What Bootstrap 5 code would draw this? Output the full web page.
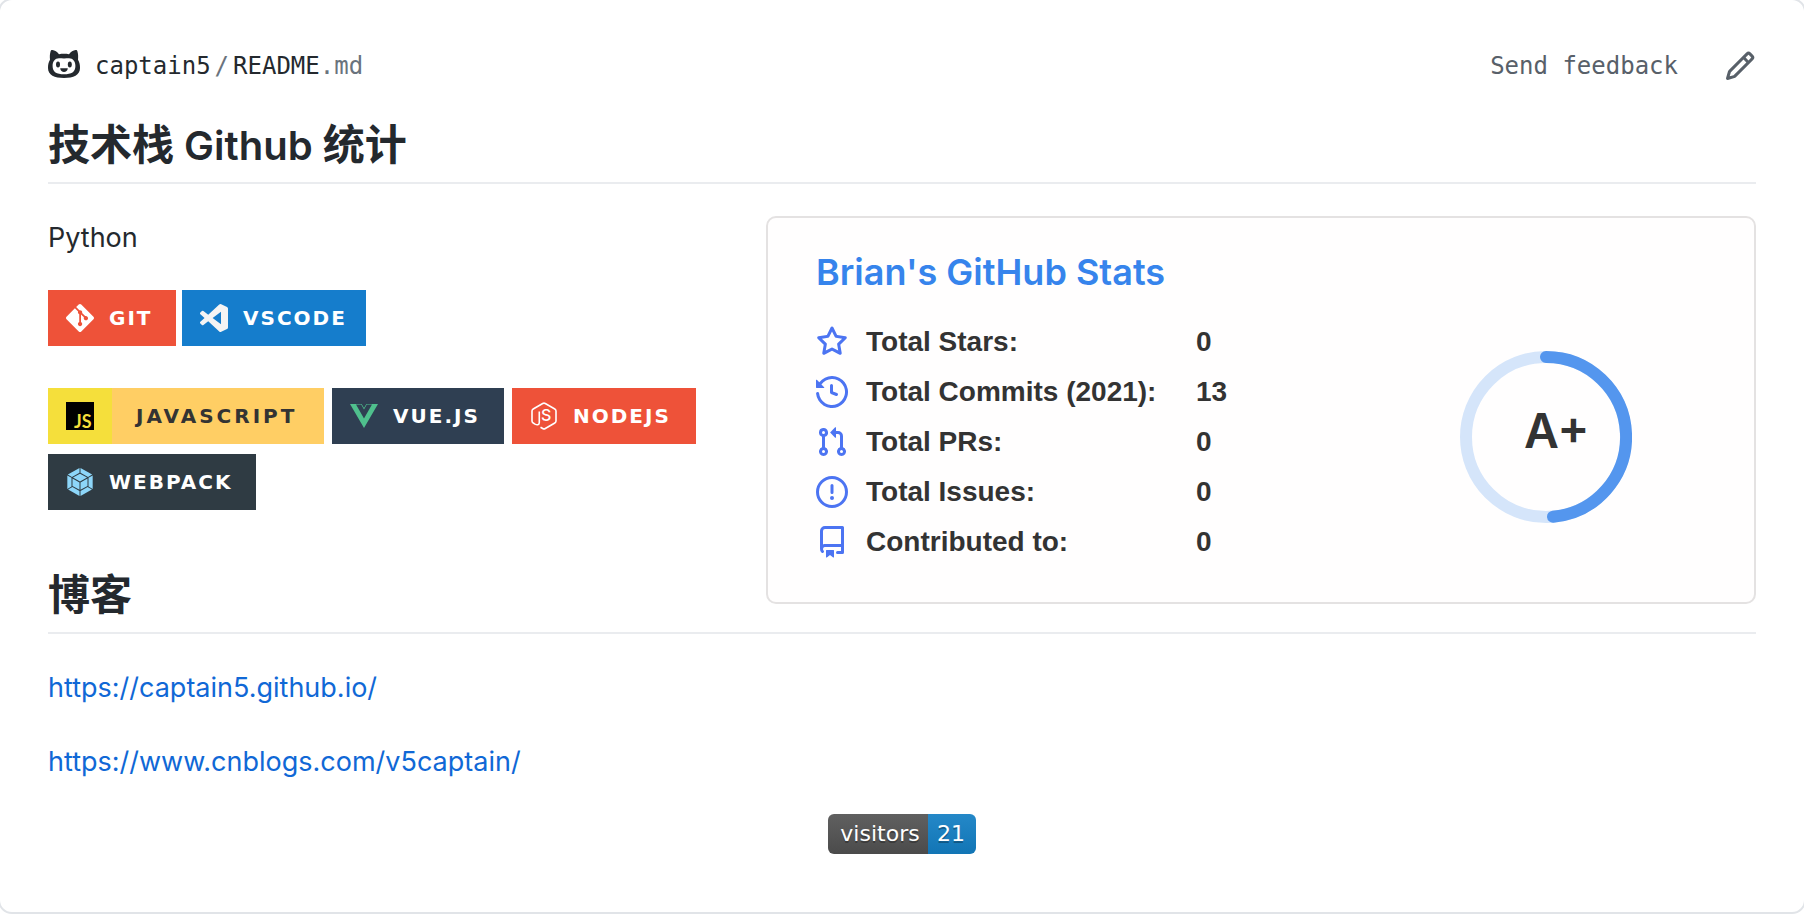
<!DOCTYPE html>
<html lang="zh-CN">
<head>
<meta charset="utf-8">
<meta name="viewport" content="width=device-width, initial-scale=1">
<title>captain5/README.md</title>
<link href="https://cdn.jsdelivr.net/npm/bootstrap@5.3.0/dist/css/bootstrap.min.css" rel="stylesheet">
<style>
  body { font-family: Inter, "Noto Sans CJK SC", sans-serif; font-size: 27px; line-height: 44px; color: #24292e; overflow-x: hidden; }
  a { color: #1068d6; }
  .readme { border: 2px solid #e1e4e8; border-radius: 14px; margin: -2px -2px 0; padding: 50px 48px 58px; }
  .mono { font-family: "DejaVu Sans Mono", monospace; font-size: 24px; line-height: 32px; }
  .topline { margin-bottom: 36px; }
  .topline .mark-cat { margin-right: 15px; }
  .topline .edit { margin-left: 46px; }
  .path-sep { color: #6a737d; margin: 0 4px; }
  .path-ext { color: #6a737d; }
  .quiet { color: #586069; }
  .quiet:hover { color: #0366d6; }
  .section-title { font-size: 42px; line-height: 54px; font-weight: 600; padding-bottom: 10px; border-bottom: 2px solid #eaecef; margin: 0 0 32px; }
  .section-title .latin { font-size: 40px; line-height: 40px; }
  .para { margin: 0 0 30px; }
  .shields { column-gap: 8px; row-gap: 10px; margin-bottom: 58px; }
  .shields.tight { column-gap: 6px; margin-bottom: 42px; }
  .shield { height: 56px; font-family: "DejaVu Sans", sans-serif; font-weight: 700; font-size: 20px; line-height: 56px; color: #fff; letter-spacing: 2px; white-space: nowrap; text-decoration: none; }
  .shield:hover { color: #fff; }
  .shield svg { width: 28px; height: 28px; margin: 0 15px 0 18px; flex: none; }
  .shield-git, .shield-node { background: #ee5239; }
  .shield-git { width: 128px; }
  .shield-code { background: #157dcc; width: 184px; }
  .shield-js { background: #ffce64; color: #333; width: 276px; letter-spacing: 3px; }
  .shield-js:hover { color: #333; }
  .shield-js .logo-cell { background: #f5df3b; width: 64px; height: 56px; margin-right: 24px; }
  .shield-js svg { margin: 0; }
  .shield-vue { background: #2f3f52; width: 172px; }
  .shield-node { width: 184px; }
  .shield-webpack { background: #2f3b43; width: 208px; }
  .stats { width: 990px; max-width: 58%; height: 388px; border: 2px solid #e4e2e2; border-radius: 10px; background: #fffefe; padding: 33px 0 0 48px; margin-left: 64px; }
  .stats-title { font-size: 36px; line-height: 42px; font-weight: 600; color: #3684ec; margin: 0 0 24px; }
  .stat-table { font-family: "Liberation Sans", Arial, sans-serif; font-size: 28px; font-weight: 700; line-height: 50px; color: #333; }
  .stat-table td, .stat-table th { padding: 0; height: 50px; }
  .stat-icon { width: 50px; }
  .stat-name { width: 330px; }
  .stat-table svg { width: 32px; height: 32px; fill: #4c74f2; display: block; }
  .rank { width: 172px; height: 172px; margin: 20px 122px 0 0; }
  .rank text { font-family: Inter, sans-serif; font-weight: 600; font-size: 48px; fill: #333; }
  .visitors { font-family: "DejaVu Sans", sans-serif; font-size: 22px; line-height: 40px; color: #fff; border-radius: 6px; overflow: hidden; text-shadow: 0 2px 0 rgba(1,1,1,.3); }
  .visitors .tag { width: 100px; padding-left: 4px; background: linear-gradient(#606060, #4b4b4b); }
  .visitors .num { width: 48px; padding-right: 2px; background: linear-gradient(#2488c8, #1275b5); }
</style>
</head>
<body>
<main class="readme">
  <header class="topline d-flex align-items-center justify-content-between mono">
    <div class="d-flex align-items-center">
      <svg class="mark-cat" width="32" height="32" viewBox="0 0 32 32" aria-hidden="true">
        <path fill="#24292e" fill-rule="evenodd" d="M2.600 1.300C2.900.3 3.400 0 4.400.1C6.800.4 9.200 2 11 4.200C14.200 3.600 17.800 3.600 21 4.200C22.800 2 25.200.4 27.600.1C28.600 0 29.100.3 29.400 1.300C30.300 4.200 30.300 7 30 9.700C31.600 12.200 32 15 32 18C32 25 25.500 28 16 28S0 25 0 18C0 15 .4 12.200 2 9.700C1.700 7 1.700 4.200 2.600 1.300ZM11 8.300C7 8.300 4.600 11.500 4.600 16C4.600 22 8.500 24.300 16 24.300S27.400 22 27.400 16C27.400 11.500 25 8.300 21 8.300C19.500 8.300 18 8.500 16 8.500S12.500 8.300 11 8.300Z"/>
        <g fill="#24292e"><ellipse cx="10" cy="14.500" rx="2" ry="2.900"/><ellipse cx="21.800" cy="14.500" rx="2" ry="2.900"/><path d="M12.200 18.200H19.800C19.500 20.800 18 22 16 22S12.500 20.800 12.200 18.200Z"/></g>
      </svg>
      <span>captain5</span><span class="path-sep">/</span><span>README</span><span class="path-ext">.md</span>
    </div>
    <div class="d-flex align-items-center">
      <a href="#feedback" class="quiet text-decoration-none">Send feedback</a>
      <a href="#edit" class="quiet edit d-block" aria-label="Edit README">
        <svg class="d-block" width="32" height="32" viewBox="0 0 16 16" fill="currentColor"><path d="M11.013 1.427a1.750 1.750 0 012.474 0l1.086 1.086a1.750 1.750 0 010 2.474l-8.610 8.610c-.21.21-.47.364-.756.445l-3.251.93a.75.75 0 01-.927-.928l.929-3.250a1.750 1.750 0 01.445-.758l8.610-8.610zm1.414 1.060a.25.25 0 00-.354 0L10.811 3.750l1.439 1.440 1.263-1.263a.25.25 0 000-.354l-1.086-1.086zM11.189 6.250L9.750 4.810l-6.286 6.287a.25.25 0 00-.064.108l-.558 1.953 1.953-.558a.249.249 0 00.108-.064l6.286-6.286z"/></svg>
      </a>
    </div>
  </header>

  <h2 class="section-title">技术栈<span class="latin"> Github </span>统计</h2>

  <section class="stats float-end d-flex justify-content-between" aria-label="GitHub stats">
    <div>
      <h3 class="stats-title">Brian's GitHub Stats</h3>
      <table class="stat-table">
        <tbody>
          <tr><td class="stat-icon"><svg viewBox="0 0 16 16"><path fill-rule="evenodd" d="M8 .25a.75.75 0 01.673.418l1.882 3.815 4.210.612a.75.75 0 01.416 1.279l-3.046 2.970.719 4.192a.75.75 0 01-1.088.791L8 12.347l-3.766 1.980a.75.75 0 01-1.088-.79l.72-4.194L.818 6.374a.75.75 0 01.416-1.280l4.210-.611L7.327.668A.75.75 0 018 .25zm0 2.445L6.615 5.500a.75.75 0 01-.564.41l-3.097.45 2.240 2.184a.75.75 0 01.216.664l-.528 3.084 2.769-1.456a.75.75 0 01.698 0l2.770 1.456-.53-3.084a.75.75 0 01.216-.664l2.240-2.183-3.096-.45a.75.75 0 01-.564-.41L8 2.694v.001z"/></svg></td><th class="stat-name" scope="row">Total Stars:</th><td>0</td></tr>
          <tr><td><svg viewBox="0 0 16 16"><path fill-rule="evenodd" d="M1.643 3.143L.427 1.927A.25.25 0 000 2.104V5.750c0 .138.112.25.25.25h3.646a.25.25 0 00.177-.427L2.715 4.215a6.500 6.500 0 11-1.180 4.458.75.75 0 10-1.493.154 8.001 8.001 0 101.600-5.684zM7.750 4a.75.75 0 01.75.75v2.992l2.028.812a.75.75 0 01-.557 1.392l-2.500-1A.75.75 0 017 8.250v-3.500A.75.75 0 017.750 4z"/></svg></td><th scope="row">Total Commits (2021):</th><td>13</td></tr>
          <tr><td><svg viewBox="0 0 16 16"><path fill-rule="evenodd" d="M7.177 3.073L9.573.677A.25.25 0 0110 .854v4.792a.25.25 0 01-.427.177L7.177 3.427a.25.25 0 010-.354zM3.750 2.500a.75.75 0 100 1.500.75.75 0 000-1.500zm-2.250.75a2.250 2.250 0 113 2.122v5.256a2.251 2.251 0 11-1.500 0V5.372A2.250 2.250 0 011.500 3.250zM11 2.500h-1V4h1a1 1 0 011 1v5.628a2.251 2.251 0 101.500 0V5A2.500 2.500 0 0011 2.500zm1 10.250a.75.75 0 111.500 0 .75.75 0 01-1.500 0zM3.750 12a.75.75 0 100 1.500.75.75 0 000-1.500z"/></svg></td><th scope="row">Total PRs:</th><td>0</td></tr>
          <tr><td><svg viewBox="0 0 16 16"><path fill-rule="evenodd" d="M8 1.500a6.500 6.500 0 100 13 6.500 6.500 0 000-13zM0 8a8 8 0 1116 0A8 8 0 010 8zm9 3a1 1 0 11-2 0 1 1 0 012 0zm-.25-6.250a.75.75 0 00-1.500 0v3.500a.75.75 0 001.500 0v-3.500z"/></svg></td><th scope="row">Total Issues:</th><td>0</td></tr>
          <tr><td><svg viewBox="0 0 16 16"><path fill-rule="evenodd" d="M2 2.500A2.500 2.500 0 014.500 0h8.750a.75.75 0 01.75.75v12.500a.75.75 0 01-.75.75h-2.500a.75.75 0 110-1.500h1.750v-2h-8a1 1 0 00-.714 1.700.75.75 0 01-1.072 1.050A2.495 2.495 0 012 11.500v-9zm10.500-1V9h-8c-.356 0-.694.074-1 .208V2.500a1 1 0 011-1h8zM5 12.250v3.250a.25.25 0 00.4.2l1.450-1.087a.25.25 0 01.3 0L8.600 15.700a.25.25 0 00.4-.2v-3.250a.25.25 0 00-.25-.25h-3.500a.25.25 0 00-.25.25z"/></svg></td><th scope="row">Contributed to:</th><td>0</td></tr>
        </tbody>
      </table>
    </div>
    <svg class="rank align-self-center" viewBox="0 0 172 172" role="img" aria-label="Rank A+">
      <circle cx="86" cy="86" r="80" fill="none" stroke="#2f80ed" stroke-opacity=".2" stroke-width="12"/>
      <path d="M86 6A80 80 0 0 1 93 165.700" fill="none" stroke="#5496ee" stroke-width="12" stroke-linecap="round"/>
      <text x="64" y="97">A+</text>
    </svg>
  </section>

  <p class="para">Python</p>

  <div class="shields tight d-flex flex-wrap">
    <a href="#git" class="shield shield-git d-flex align-items-center"><svg viewBox="0 0 24 24" fill="#fff"><path d="M23.546 10.930L13.067.452c-.604-.603-1.582-.603-2.188 0L8.708 2.627l2.760 2.760c.645-.215 1.379-.07 1.889.441.516.515.658 1.258.438 1.900l2.658 2.660c.645-.223 1.387-.078 1.900.435.721.72.721 1.884 0 2.604-.719.719-1.881.719-2.600 0-.539-.541-.674-1.337-.404-1.996L12.860 8.955v6.525c.176.086.342.203.488.348.713.721.713 1.883 0 2.600-.719.721-1.889.721-2.609 0-.719-.719-.719-1.879 0-2.598.182-.18.387-.316.605-.406V8.835c-.217-.091-.424-.222-.6-.401-.545-.545-.676-1.342-.396-2.009L7.636 3.700.45 10.881c-.6.605-.6 1.584 0 2.189l10.480 10.477c.604.604 1.582.604 2.186 0l10.430-10.430c.605-.603.605-1.582 0-2.187"/></svg>GIT</a>
    <a href="#vscode" class="shield shield-code d-flex align-items-center"><svg viewBox="0 0 24 24" fill="#f4f4f4"><path d="M23.150 2.587L18.210.21a1.494 1.494 0 0 0-1.705.29l-9.460 8.630-4.120-3.128a.999.999 0 0 0-1.276.057L.327 7.261A1 1 0 0 0 .326 8.740L3.899 12 .326 15.260a1 1 0 0 0 .001 1.479L1.650 17.940a.999.999 0 0 0 1.276.057l4.120-3.128 9.460 8.630a1.492 1.492 0 0 0 1.704.29l4.942-2.377A1.500 1.500 0 0 0 24 20.060V3.939a1.500 1.500 0 0 0-.85-1.352zm-5.146 14.861L10.826 12l7.178-5.448v10.896z"/></svg>VSCODE</a>
  </div>

  <div class="shields d-flex flex-wrap">
    <a href="#javascript" class="shield shield-js d-flex align-items-center"><span class="logo-cell d-flex align-items-center justify-content-center"><svg class="overflow-visible" viewBox="0 0 28 28"><path d="M0 0h28v28H0z"/><text x="8" y="26" font-family="Lato, sans-serif" font-size="18" font-weight="700" letter-spacing="0" fill="#f5df3b">JS</text></svg></span>JAVASCRIPT</a>
    <a href="#vue" class="shield shield-vue d-flex align-items-center"><svg viewBox="0 0 24 24" fill="#4fc08d"><path d="M24 1.610H14.060L12 5.160 9.940 1.610H0L12 22.390ZM12 14.080 5.160 2.230H9.590L12 6.410l2.410-4.180h4.430Z"/></svg>VUE.JS</a>
    <a href="#nodejs" class="shield shield-node d-flex align-items-center"><svg viewBox="0 0 28 28"><path d="M9.300 9.500V20.500C9.300 23 7 23.200 5 22.100L3.200 21Q2 20.300 2 19V9Q2 7.700 3.200 7L12.700 1.500Q14 .8 15.300 1.500L24.800 7Q26 7.700 26 9V19Q26 20.300 24.800 21L15.300 26.500Q14 27.300 12.700 26.500L10.500 25.200" fill="none" stroke="#fff" stroke-width="1.600"/><text x="11" y="19" font-family="Inter, sans-serif" font-size="16" font-weight="500" letter-spacing="0" fill="#fff">S</text></svg>NODEJS</a>
    <a href="#webpack" class="shield shield-webpack d-flex align-items-center"><svg viewBox="0 0 24 24" fill="#8dd6f9"><path d="M22.199 18.498l-9.770 5.502v-4.286l6.087-3.334 3.683 2.117zm.668-.603V6.388l-3.575 2.054v7.396zm-21.066.603l9.770 5.502v-4.286L5.484 16.381l-3.683 2.117zm-.668-.603V6.388l3.575 2.054v7.396zm.418-12.252l10.020-5.644v4.143L5.152 7.659l-.049.028zm20.898 0l-10.020-5.644v4.143l6.419 3.515.049.028 3.552-2.043zm-10.878 13.096l-6.006-3.287V8.938l6.005 3.453v6.349zm.858 0l6.005-3.287V8.938l-6.005 3.453zM5.972 8.185l6.029-3.302 6.029 3.302-6.029 3.466z"/></svg>WEBPACK</a>
  </div>

  <h2 class="section-title">博客</h2>
  <p class="para"><a class="text-decoration-none" href="https://captain5.github.io/">https://captain5.github.io/</a></p>
  <p class="para"><a class="text-decoration-none" href="https://www.cnblogs.com/v5captain/">https://www.cnblogs.com/v5captain/</a></p>
  <div class="d-flex justify-content-center">
    <div class="visitors d-flex text-center"><span class="tag">visitors</span><span class="num">21</span></div>
  </div>
</main>
<script src="https://cdn.jsdelivr.net/npm/bootstrap@5.3.0/dist/js/bootstrap.bundle.min.js"></script>
</body>
</html>
